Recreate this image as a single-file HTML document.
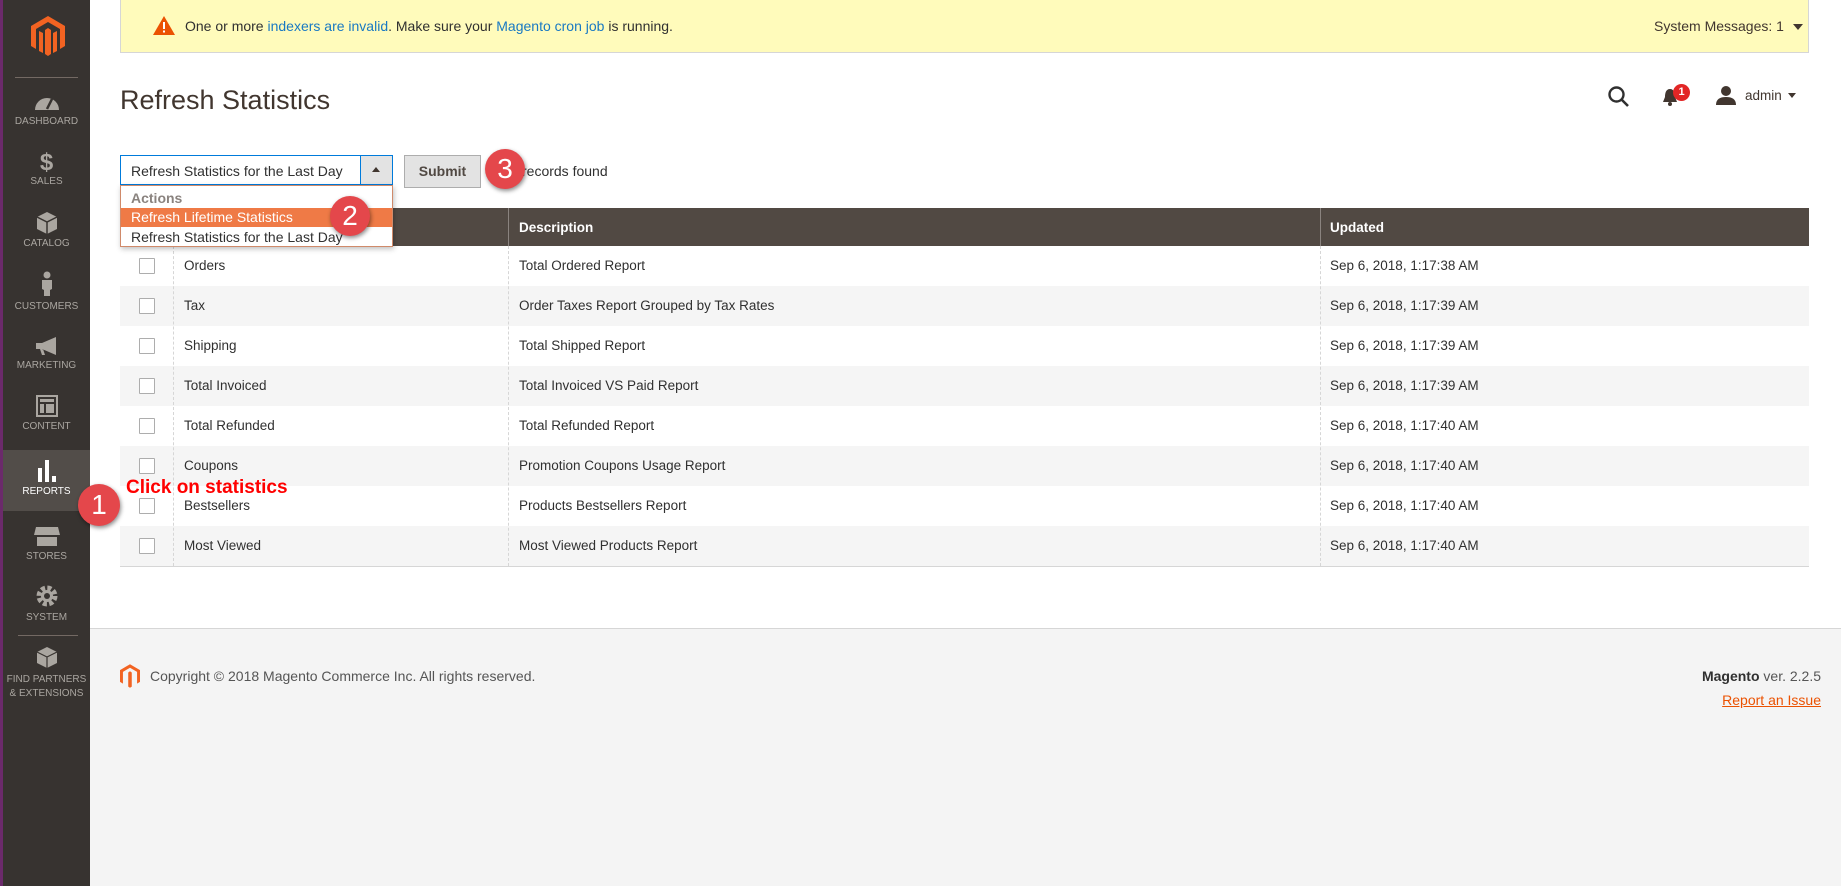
<!DOCTYPE html>
<html><head><meta charset="utf-8"><style>
*{margin:0;padding:0;box-sizing:border-box}
body{width:1841px;height:886px;overflow:hidden;background:#fff;font-family:"Liberation Sans",sans-serif;color:#303030;position:relative}
.abs{position:absolute}
#side{left:0;top:0;width:90px;height:886px;background:#373330;border-left:3px solid #6b2a6b}
.mi{position:absolute;left:0;width:87px;text-align:center;color:#aaa6a0;font-size:10px;letter-spacing:0}
.mi svg{display:block;margin:0 auto 4px}
#banner{left:120px;top:0;width:1689px;height:53px;background:#fffbbb;border:1px solid #d6d6d6;border-top:none;font-size:14px}
a{color:#1979c3;text-decoration:none}
.row{position:absolute;left:120px;width:1689px;height:40px;font-size:13.5px;color:#303030}
.row div{position:absolute;top:12px}
.cb{position:absolute;left:19px;top:12px;width:16px;height:16px;border:1px solid #adadad;background:#fff;border-radius:1px}
.circ{position:absolute;border-radius:50%;background:#e4474b;color:#fff;text-align:center;box-shadow:1px 2px 4px rgba(0,0,0,.45);font-size:28px}
</style></head><body>
<div id="side" class="abs">
 <svg class="abs" style="left:28px;top:16px" width="34" height="40" viewBox="0 0 34 40"><path d="M17 0L0 10v20l5 3V13l12-7 12 7v20l5-3V10z M14 14v24l3 2 3-2V14l-3-2z" fill="#f26322"/><path d="M8 15v20l4 2V17z M26 15v20l-4 2V17z" fill="#f26322"/></svg>
 <div class="abs" style="left:12px;top:77px;width:63px;height:1px;background:#736963"></div>
 <div class="mi" style="top:92px"><svg width="26" height="20" viewBox="0 0 26 20"><path d="M1 18A12 12 0 0 1 25 18z" fill="#aaa6a0"/><path d="M13 17L18 7" stroke="#373330" stroke-width="2.5"/></svg>DASHBOARD</div>
 <div class="mi" style="top:150px"><div style="font-size:24px;font-weight:bold;line-height:26px">$</div>SALES</div>
 <div class="mi" style="top:210px"><svg width="22" height="24" viewBox="0 0 22 24"><path d="M11 2L21 7v12l-10 5L1 19V7z" fill="#aaa6a0"/><path d="M1 7l10 5 10-5M11 12v12" stroke="#373330" stroke-width="1.5" fill="none"/></svg>CATALOG</div>
 <div class="mi" style="top:271px"><svg width="14" height="26" viewBox="0 0 14 26"><circle cx="7" cy="4" r="3.5" fill="#aaa6a0"/><path d="M2 9h10v9l-2 1v6H4v-6l-2-1z" fill="#aaa6a0"/></svg>CUSTOMERS</div>
 <div class="mi" style="top:336px"><svg width="26" height="20" viewBox="0 0 26 20"><path d="M2 7h6l14-6v18L8 13H2z M6 13l2 6h3l-2-6z" fill="#aaa6a0"/></svg>MARKETING</div>
 <div class="mi" style="top:395px"><svg width="22" height="22" viewBox="0 0 22 22"><rect x="1" y="1" width="20" height="20" fill="none" stroke="#aaa6a0" stroke-width="2"/><rect x="4" y="4" width="14" height="3" fill="#aaa6a0"/><rect x="4" y="9" width="4" height="9" fill="#aaa6a0"/><rect x="10" y="9" width="8" height="9" fill="#aaa6a0"/></svg>CONTENT</div>
 <div class="abs" style="left:0;top:450px;width:87px;height:61px;background:#524d49"></div>
 <div class="mi" style="top:460px;color:#fff"><svg width="22" height="22" viewBox="0 0 22 22"><rect x="2" y="8" width="4" height="14" fill="#fff"/><rect x="9" y="0" width="4" height="22" fill="#fff"/><rect x="16" y="16" width="4" height="6" fill="#fff"/></svg>REPORTS</div>
 <div class="mi" style="top:525px"><svg width="26" height="22" viewBox="0 0 26 22"><path d="M2 2h22l2 8H0z M3 12h20v9H3z" fill="#aaa6a0"/></svg>STORES</div>
 <div class="mi" style="top:584px"><svg width="24" height="24" viewBox="0 0 24 24"><circle cx="12" cy="12" r="8" fill="none" stroke="#aaa6a0" stroke-width="5" stroke-dasharray="4 2.3"/><circle cx="12" cy="12" r="6" fill="#aaa6a0"/><circle cx="12" cy="12" r="3" fill="#373330"/></svg>SYSTEM</div>
 <div class="abs" style="left:15px;top:635px;width:60px;height:1px;background:#736963"></div>
 <div class="mi" style="top:645px;line-height:14px"><svg width="24" height="24" viewBox="0 0 24 24"><path d="M12 2l10 5v11l-10 5L2 18V7z" fill="#aaa6a0"/><path d="M2 7l10 5 10-5M12 12v11" stroke="#373330" stroke-width="1.2" fill="none"/></svg>FIND PARTNERS<br>&amp; EXTENSIONS</div>
</div>

<div id="banner" class="abs">
 <svg class="abs" style="left:32px;top:16px" width="22" height="19" viewBox="0 0 22 19"><path d="M11 0L22 19H0z" fill="#eb5202"/><rect x="10" y="6" width="2" height="7" fill="#fff"/><rect x="10" y="14.5" width="2" height="2" fill="#fff"/></svg>
 <div class="abs" style="left:64px;top:18px">One or more <a>indexers are invalid</a>. Make sure your <a>Magento cron job</a> is running.</div>
 <div class="abs" style="left:1533px;top:18px;color:#41362f">System Messages: 1</div>
 <div class="abs" style="left:1672px;top:24px;border:5px solid transparent;border-top:6px solid #41362f"></div>
</div>

<div class="abs" style="left:120px;top:85px;font-size:27px;color:#41362f">Refresh Statistics</div>
<svg class="abs" style="left:1607px;top:85px" width="24" height="24" viewBox="0 0 24 24"><circle cx="9.5" cy="9.5" r="7" fill="none" stroke="#303030" stroke-width="2.4"/><path d="M15 15l6 6" stroke="#303030" stroke-width="2.6"/></svg>
<svg class="abs" style="left:1662px;top:88px" width="16" height="19" viewBox="0 0 16 19"><path d="M8 1C4 1 3 5 3 9L1 14h14l-2-5C13 5 12 1 8 1z" fill="#41362f"/><circle cx="8" cy="16" r="2" fill="#41362f"/></svg>
<div class="abs" style="left:1673px;top:84px;width:17px;height:17px;border-radius:50%;background:#e22626;color:#fff;font-size:11px;font-weight:bold;text-align:center;line-height:17px">1</div>
<svg class="abs" style="left:1716px;top:85px" width="20" height="20" viewBox="0 0 20 20"><circle cx="10" cy="6" r="5" fill="#41362f"/><path d="M0 20c0-6 4-8 10-8s10 2 10 8z" fill="#41362f"/></svg>
<div class="abs" style="left:1745px;top:88px;font-size:13.5px;color:#41362f">admin</div>
<div class="abs" style="left:1788px;top:93px;border:4px solid transparent;border-top:5px solid #41362f"></div>

<div class="abs" style="left:120px;top:155px;width:273px;height:30px;border:1px solid #007bdb;background:#fff;font-size:14px;padding:7px 10px;color:#303030;white-space:nowrap">Refresh Statistics for the Last Day</div>
<div class="abs" style="left:360px;top:155px;width:33px;height:30px;border:1px solid #007bdb;background:#e3e3e3"></div>
<div class="abs" style="left:372px;top:167px;border:4px solid transparent;border-bottom:5px solid #41362f;border-top:none"></div>
<div class="abs" style="left:404px;top:155px;width:77px;height:33px;border:1px solid #adadad;background:#e3e3e3;font-size:14px;font-weight:bold;text-align:center;line-height:31px;color:#514943">Submit</div>
<div class="abs" style="left:522px;top:163px;font-size:14px">records found</div>

<div class="abs" style="left:120px;top:208px;width:1689px;height:359px;border:1px solid #d6d6d6"></div>
<div class="abs" style="left:120px;top:208px;width:1689px;height:38px;background:#514943;color:#fff;font-size:13.5px;font-weight:bold">
 <div class="abs" style="left:388px;top:0;width:1px;height:38px;background:#8a837f"></div>
 <div class="abs" style="left:1200px;top:0;width:1px;height:38px;background:#8a837f"></div>
 <div class="abs" style="left:399px;top:12px">Description</div>
 <div class="abs" style="left:1210px;top:12px">Updated</div>
</div>
<div class="row" style="top:246px;background:#fff"><span class="cb"></span><div style="left:64px">Orders</div><div style="left:399px">Total Ordered Report</div><div style="left:1210px">Sep 6, 2018, 1:17:38 AM</div></div>
<div class="row" style="top:286px;background:#f5f5f5"><span class="cb"></span><div style="left:64px">Tax</div><div style="left:399px">Order Taxes Report Grouped by Tax Rates</div><div style="left:1210px">Sep 6, 2018, 1:17:39 AM</div></div>
<div class="row" style="top:326px;background:#fff"><span class="cb"></span><div style="left:64px">Shipping</div><div style="left:399px">Total Shipped Report</div><div style="left:1210px">Sep 6, 2018, 1:17:39 AM</div></div>
<div class="row" style="top:366px;background:#f5f5f5"><span class="cb"></span><div style="left:64px">Total Invoiced</div><div style="left:399px">Total Invoiced VS Paid Report</div><div style="left:1210px">Sep 6, 2018, 1:17:39 AM</div></div>
<div class="row" style="top:406px;background:#fff"><span class="cb"></span><div style="left:64px">Total Refunded</div><div style="left:399px">Total Refunded Report</div><div style="left:1210px">Sep 6, 2018, 1:17:40 AM</div></div>
<div class="row" style="top:446px;background:#f5f5f5"><span class="cb"></span><div style="left:64px">Coupons</div><div style="left:399px">Promotion Coupons Usage Report</div><div style="left:1210px">Sep 6, 2018, 1:17:40 AM</div></div>
<div class="row" style="top:486px;background:#fff"><span class="cb"></span><div style="left:64px">Bestsellers</div><div style="left:399px">Products Bestsellers Report</div><div style="left:1210px">Sep 6, 2018, 1:17:40 AM</div></div>
<div class="row" style="top:526px;background:#f5f5f5"><span class="cb"></span><div style="left:64px">Most Viewed</div><div style="left:399px">Most Viewed Products Report</div><div style="left:1210px">Sep 6, 2018, 1:17:40 AM</div></div>
<div class="abs" style="left:173px;top:246px;height:320px;border-left:1px dashed #d6d6d6"></div>
<div class="abs" style="left:508px;top:246px;height:320px;border-left:1px dashed #d6d6d6"></div>
<div class="abs" style="left:1320px;top:246px;height:320px;border-left:1px dashed #d6d6d6"></div>

<div class="abs" style="left:120px;top:185px;width:273px;height:62px;background:#fff;border:1px solid #d08a6a;box-shadow:1px 2px 5px rgba(0,0,0,.25);font-size:14px">
 <div class="abs" style="left:10px;top:4px;font-weight:bold;color:#8a837f">Actions</div>
 <div class="abs" style="left:0;top:22px;width:271px;height:19px;background:#ef7a46;color:#fff;padding-left:10px;line-height:19px">Refresh Lifetime Statistics</div>
 <div class="abs" style="left:10px;top:43px;white-space:nowrap">Refresh Statistics for the Last Day</div>
</div>

<div class="circ" style="left:330px;top:196px;width:40px;height:40px;line-height:40px">2</div>
<div class="circ" style="left:485px;top:149px;width:40px;height:40px;line-height:40px">3</div>
<div class="circ" style="left:78px;top:484px;width:42px;height:42px;line-height:42px">1</div>
<div class="abs" style="left:126px;top:477px;font-size:19px;font-weight:bold;color:#f00">Click on statistics</div>

<div class="abs" style="left:90px;top:628px;width:1751px;height:258px;background:#f4f4f4;border-top:1px solid #d6d6d6"></div>
<svg class="abs" style="left:120px;top:664px" width="20" height="24" viewBox="0 0 34 40"><path d="M17 0L0 10v20l5 3V13l12-7 12 7v20l5-3V10z M14 14v24l3 2 3-2V14l-3-2z" fill="#f26322"/></svg>
<div class="abs" style="left:150px;top:668px;font-size:14px;color:#555">Copyright © 2018 Magento Commerce Inc. All rights reserved.</div>
<div class="abs" style="right:20px;top:668px;font-size:14px;color:#555"><b style="color:#303030">Magento</b> ver. 2.2.5</div>
<div class="abs" style="right:20px;top:692px;font-size:14px;color:#eb5202;text-decoration:underline">Report an Issue</div>
</body></html>
